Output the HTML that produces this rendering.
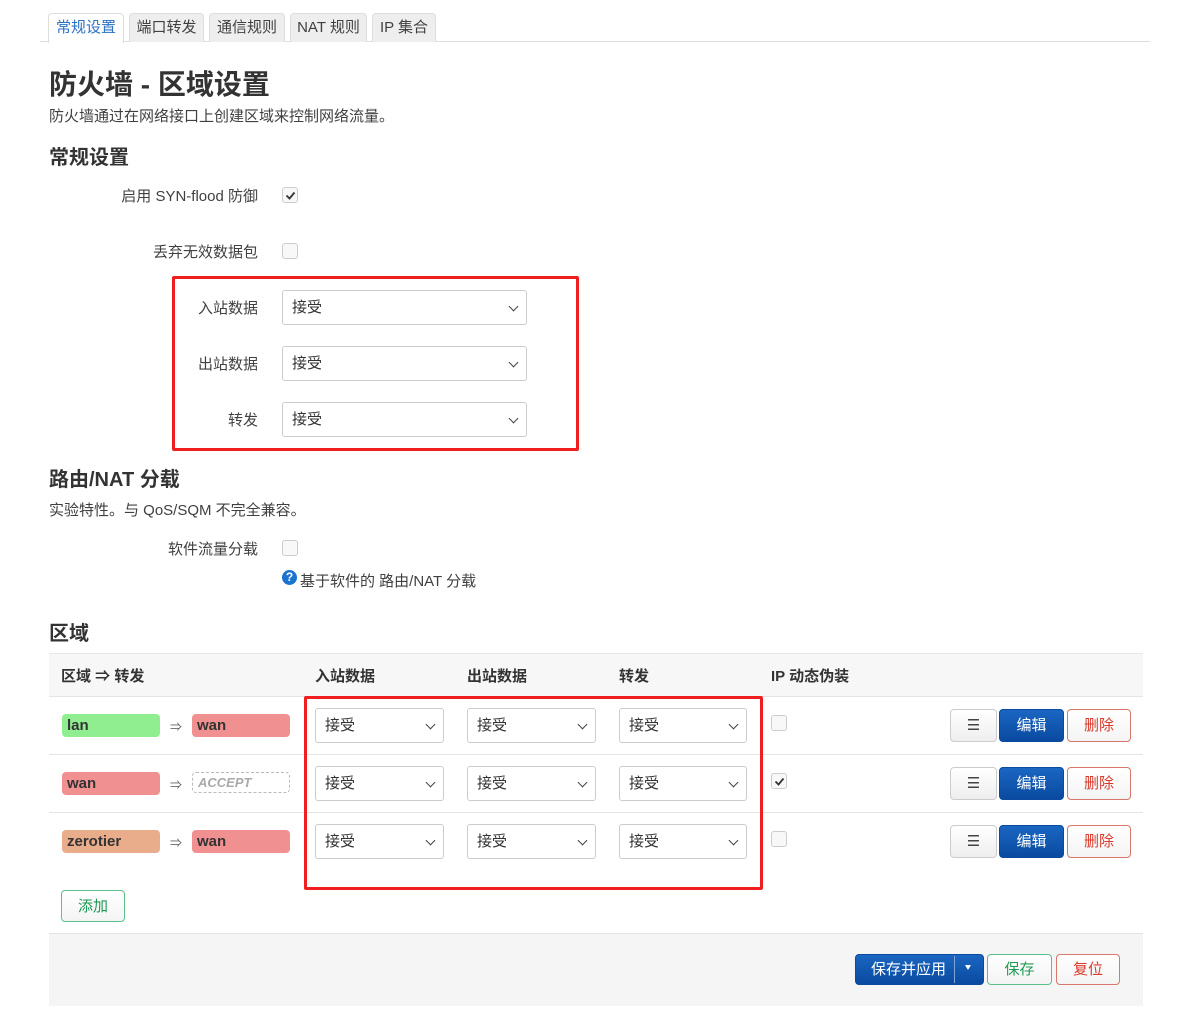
<!DOCTYPE html>
<html><head><meta charset="utf-8"><style>
*{box-sizing:border-box;margin:0;padding:0}
body{width:1192px;height:1029px;background:#fff;position:relative;font-family:"Liberation Sans","Noto Sans CJK SC",sans-serif;color:#404040;font-size:15px;overflow:hidden}
.a{position:absolute}
.tab{position:absolute;top:13px;height:29px;border:1px solid #ddd;border-bottom:none;border-radius:4px 4px 0 0;background:#eee;font-size:15px;line-height:27px;text-align:center;color:#404040}
.lbl{position:absolute;right:934px;font-size:15px;line-height:20px;white-space:nowrap;color:#404040}
.cb{position:absolute;width:16px;height:16px;border:1px solid #ccc;border-radius:3px;background:#f8f8f8}
.cb svg{position:absolute;left:1px;top:1px}
.sel{position:absolute;height:35px;border:1px solid #ccc;border-radius:3px;background:#fff;font-size:15px;line-height:34px;padding-left:9px;color:#333}
.sel:after{content:"";position:absolute;right:9px;top:12px;width:6px;height:6px;border-right:1.5px solid #444;border-bottom:1.5px solid #444;transform:rotate(45deg)}
h3{position:absolute;font-size:20px;font-weight:bold;color:#333}
.badge{position:absolute;height:23px;border-radius:4px;font-weight:bold;font-size:15px;line-height:23px;padding-left:5px;color:#333}
.arr{position:absolute;font-size:12px;color:#666}
.btn{position:absolute;height:33px;border-radius:4px;font-size:15px;line-height:31px;text-align:center}
.b1{border:1px solid #ccc;background:linear-gradient(#fff,#eee);color:#444}
.b2{background:linear-gradient(#1a66c2,#0a4aa0);color:#fff;border:1px solid #0a4aa0}
.b3{border:1px solid #d9786a;background:linear-gradient(#fff,#f4f4f4);color:#d9392b}
.b4{border:1px solid #5cc08a;background:linear-gradient(#fff,#f4f4f4);color:#1e9a55}
.th{position:absolute;top:665px;font-weight:bold;font-size:15px;color:#333}
</style></head><body>
<div class="a" style="left:40px;top:41px;width:1110px;height:1px;background:#ddd"></div>
<div class="tab" style="left:48px;width:76px;background:#fff;color:#2a72c3;height:30px">常规设置</div>
<div class="tab" style="left:129px;width:75px">端口转发</div>
<div class="tab" style="left:209px;width:76px">通信规则</div>
<div class="tab" style="left:290px;width:77px">NAT 规则</div>
<div class="tab" style="left:372px;width:64px">IP 集合</div>

<div class="a" style="left:49px;top:63px;font-size:28px;font-weight:bold;color:#333">防火墙 - 区域设置</div>
<div class="a" style="left:49px;top:105px;font-size:15px">防火墙通过在网络接口上创建区域来控制网络流量。</div>
<h3 style="left:49px;top:141px">常规设置</h3>

<div class="lbl" style="top:187px">启用 SYN-flood 防御</div>
<div class="cb" style="left:282px;top:187px"><svg width="13" height="13" viewBox="0 0 13 13"><path d="M2.5 6.5l3 3 5-6" fill="none" stroke="#333" stroke-width="1.8"/></svg></div>
<div class="lbl" style="top:243px">丢弃无效数据包</div>
<div class="cb" style="left:282px;top:243px"></div>

<div class="a" style="left:172px;top:276px;width:407px;height:175px;border:3px solid #f01e1e;border-radius:2px"></div>
<div class="lbl" style="top:299px">入站数据</div>
<div class="sel" style="left:282px;top:290px;width:245px">接受</div>
<div class="lbl" style="top:355px">出站数据</div>
<div class="sel" style="left:282px;top:346px;width:245px">接受</div>
<div class="lbl" style="top:411px">转发</div>
<div class="sel" style="left:282px;top:402px;width:245px">接受</div>

<h3 style="left:49px;top:463px">路由/NAT 分载</h3>
<div class="a" style="left:49px;top:499px">实验特性。与 QoS/SQM 不完全兼容。</div>
<div class="lbl" style="top:540px">软件流量分载</div>
<div class="cb" style="left:282px;top:540px"></div>
<div class="a" style="left:282px;top:570px;width:15px;height:15px;border-radius:50%;background:#1a73d0;color:#fff;font-size:12px;font-weight:bold;line-height:15px;text-align:center">?</div>
<div class="a" style="left:300px;top:570px">基于软件的 路由/NAT 分载</div>

<h3 style="left:49px;top:617px">区域</h3>
<div class="a" style="left:49px;top:653px;width:1094px;height:44px;background:#f7f7f7;border-top:1px solid #e8e8e8;border-bottom:1px solid #e4e4e4"></div>
<div class="th" style="left:61px">区域 ⇒ 转发</div>
<div class="th" style="left:315px">入站数据</div>
<div class="th" style="left:467px">出站数据</div>
<div class="th" style="left:619px">转发</div>
<div class="th" style="left:771px">IP 动态伪装</div>
<div class="a" style="left:49px;top:754px;width:1094px;height:1px;background:#e4e4e4"></div>
<div class="a" style="left:49px;top:812px;width:1094px;height:1px;background:#e4e4e4"></div>

<div class="badge" style="left:62px;top:714px;width:98px;background:#90ee90">lan</div>
<div class="arr" style="left:170px;top:718px">⇒</div>
<div class="badge" style="left:192px;top:714px;width:98px;background:#f09090">wan</div>
<div class="badge" style="left:62px;top:772px;width:98px;background:#f09090">wan</div>
<div class="arr" style="left:170px;top:776px">⇒</div>
<div class="a" style="left:192px;top:772px;width:98px;height:21px;border:1px dashed #bbb;border-radius:4px;font-style:italic;font-weight:bold;color:#aaa;font-size:13px;line-height:19px;padding-left:5px">ACCEPT</div>
<div class="badge" style="left:62px;top:830px;width:98px;background:#e9ad8c">zerotier</div>
<div class="arr" style="left:170px;top:834px">⇒</div>
<div class="badge" style="left:192px;top:830px;width:98px;background:#f09090">wan</div>

<div class="sel" style="left:315px;top:708px;width:129px">接受</div>
<div class="sel" style="left:467px;top:708px;width:129px">接受</div>
<div class="sel" style="left:619px;top:708px;width:128px">接受</div>
<div class="sel" style="left:315px;top:766px;width:129px">接受</div>
<div class="sel" style="left:467px;top:766px;width:129px">接受</div>
<div class="sel" style="left:619px;top:766px;width:128px">接受</div>
<div class="sel" style="left:315px;top:824px;width:129px">接受</div>
<div class="sel" style="left:467px;top:824px;width:129px">接受</div>
<div class="sel" style="left:619px;top:824px;width:128px">接受</div>

<div class="cb" style="left:771px;top:715px"></div>
<div class="cb" style="left:771px;top:773px"><svg width="13" height="13" viewBox="0 0 13 13"><path d="M2.5 6.5l3 3 5-6" fill="none" stroke="#333" stroke-width="1.8"/></svg></div>
<div class="cb" style="left:771px;top:831px"></div>

<div class="a" style="left:304px;top:696px;width:459px;height:194px;border:3px solid #f01e1e;border-radius:2px"></div>

<div class="btn b1" style="left:950px;top:709px;width:47px">☰</div>
<div class="btn b2" style="left:999px;top:709px;width:65px">编辑</div>
<div class="btn b3" style="left:1067px;top:709px;width:64px">删除</div>
<div class="btn b1" style="left:950px;top:767px;width:47px">☰</div>
<div class="btn b2" style="left:999px;top:767px;width:65px">编辑</div>
<div class="btn b3" style="left:1067px;top:767px;width:64px">删除</div>
<div class="btn b1" style="left:950px;top:825px;width:47px">☰</div>
<div class="btn b2" style="left:999px;top:825px;width:65px">编辑</div>
<div class="btn b3" style="left:1067px;top:825px;width:64px">删除</div>

<div class="btn b4" style="left:61px;top:890px;width:64px;height:32px">添加</div>

<div class="a" style="left:49px;top:933px;width:1094px;height:73px;background:#f5f5f5;border-top:1px solid #e4e4e4"></div>
<div class="btn b2" style="left:855px;top:954px;width:129px;height:31px;line-height:29px;text-align:left;padding-left:15px">保存并应用</div>
<div class="a" style="left:954px;top:956px;width:1px;height:27px;background:#7fa4d6"></div>
<div class="a" style="left:965px;top:965px;width:0;height:0;border-left:3px solid transparent;border-right:3px solid transparent;border-top:5px solid #fff"></div>
<div class="btn b4" style="left:987px;top:954px;width:65px;height:31px;line-height:29px">保存</div>
<div class="btn b3" style="left:1056px;top:954px;width:64px;height:31px;line-height:29px">复位</div>
</body></html>
